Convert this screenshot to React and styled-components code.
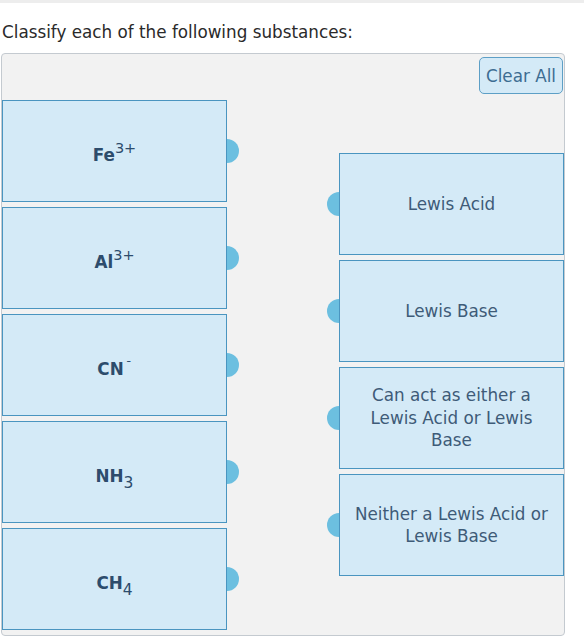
import React from "react";
import styled, { createGlobalStyle } from "styled-components";

const categories = [
  "Lewis Acid",
  "Lewis Base",
  "Can act as either a Lewis Acid or Lewis Base",
  "Neither a Lewis Acid or Lewis Base",
];

function App() {
  const substances = [
    { id: "fe", label: <>Fe<Sup>3+</Sup></> },
    { id: "al", label: <>Al<Sup>3+</Sup></> },
    { id: "cn", label: <>CN<Sup $small>¯</Sup></> },
    { id: "nh3", label: <>NH<Sub>3</Sub></> },
    { id: "ch4", label: <>CH<Sub>4</Sub></> },
  ];

  return (
    <>
      <GlobalStyle />
      <TopBar />
      <Title>Classify each of the following substances:</Title>
      <Panel>
        <Toolbar>
          <ClearButton type="button">Clear All</ClearButton>
        </Toolbar>
        <Board>
          <Column>
            {substances.map((s) => (
              <Card key={s.id}>
                <Formula>{s.label}</Formula>
                <Knob $side="right" />
              </Card>
            ))}
          </Column>
          <Column $offset>
            {categories.map((c) => (
              <Card key={c}>
                <Knob $side="left" />
                <Category>{c}</Category>
              </Card>
            ))}
          </Column>
        </Board>
      </Panel>
    </>
  );
}

export default App;

const GlobalStyle = createGlobalStyle`
  body {
    margin: 0;
    background: #fff;
    font-family: "DejaVu Sans", Verdana, sans-serif;
  }
`;

const TopBar = styled.div`
  height: 3px;
  background: #ededed;
`;

const Title = styled.div`
  font-size: 16.8px;
  line-height: 20px;
  color: #2a2a2a;
  margin: 19px 0 11px 2px;
`;

const Panel = styled.div`
  width: 562px;
  height: 581px;
  margin-left: 1px;
  border: 1px solid #c4cad0;
  border-radius: 4px;
  background: #f2f2f2;
  display: flex;
  flex-direction: column;
`;

const Toolbar = styled.div`
  display: flex;
  justify-content: flex-end;
  padding: 3px 1px 0 0;
`;

const ClearButton = styled.button`
  height: 37px;
  padding: 0 6px;
  font-family: "DejaVu Sans", Verdana, sans-serif;
  font-size: 16.8px;
  color: #3d6d92;
  background: #d4eaf7;
  border: 1px solid #5d9fc6;
  border-radius: 5px;
`;

const Board = styled.div`
  display: flex;
  justify-content: space-between;
  margin-top: 6px;
`;

const Column = styled.div`
  display: flex;
  flex-direction: column;
  gap: 5px;
  margin-top: ${(p) => (p.$offset ? "53px" : "0")};
`;

const Card = styled.div`
  position: relative;
  box-sizing: border-box;
  width: 225px;
  height: 102px;
  background: #d4eaf7;
  border: 1px solid #4a95c0;
  display: flex;
  align-items: center;
  justify-content: center;
  text-align: center;
`;

const Knob = styled.span`
  position: absolute;
  top: 50%;
  width: 12px;
  height: 24px;
  margin-top: -12px;
  background: #6cbfe0;
  ${(p) =>
    p.$side === "right"
      ? "left: 100%; margin-left: 1px; border-radius: 0 12px 12px 0;"
      : "right: 100%; margin-right: 1px; border-radius: 12px 0 0 12px;"}
`;

const Formula = styled.div`
  font-size: 16.8px;
  font-weight: bold;
  color: #2d4c6c;
  padding-top: 7px;
`;

const Sup = styled.sup`
  font-weight: normal;
  font-size: ${(p) => (p.$small ? "12px" : "14.5px")};
  vertical-align: ${(p) => (p.$small ? "5px" : "8px")};
  line-height: 0;
  margin-left: ${(p) => (p.$small ? "2px" : "0")};
`;

const Sub = styled.sub`
  font-weight: normal;
  font-size: 15.5px;
  vertical-align: -6px;
  line-height: 0;
`;

const Category = styled.div`
  padding: 0 12px;
  font-size: 16.8px;
  line-height: 22.5px;
  color: #3e5b78;
`;
